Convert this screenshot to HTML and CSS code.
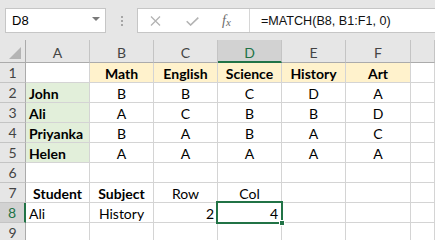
FILE: index.html
```html
<!DOCTYPE html>
<html lang="en">
<head>
    <meta charset="UTF-8">
    <meta name="viewport" content="width=device-width, initial-scale=1.0">
    <title>MATCH</title>
    <link rel="stylesheet" href="styles.css">
</head>
<body>
    <!-- name box + formula bar -->
    <div class="topbar">
        <div class="namebox">
            <span class="ref">D8</span>
            <span class="caret"></span>
        </div>
        <div class="grip"><i></i><i></i><i></i></div>
        <div class="fbar">
            <div class="fbtns">
                <svg class="ico-x" width="11" height="10" viewBox="0 0 11 10"><path d="M1 0.5 L10 9.5 M10 0.5 L1 9.5" stroke="#b3b3b3" stroke-width="1.3" fill="none"/></svg>
                <svg class="ico-ok" width="13" height="9" viewBox="0 0 13 9"><path d="M0.7 4.2 L4.6 8 L12.3 0.6" stroke="#b3b3b3" stroke-width="1.6" fill="none"/></svg>
                <span class="fx">f<i>x</i></span>
            </div>
            <div class="formula">=MATCH(B8, B1:F1, 0)</div>
        </div>
    </div>

    <!-- sheet -->
    <div class="sheet">
        <div class="corner"></div>
        <div class="ch">A</div>
        <div class="ch">B</div>
        <div class="ch">C</div>
        <div class="ch sel">D</div>
        <div class="ch">E</div>
        <div class="ch">F</div>
        <div class="ch"></div>

        <div class="rh">1</div>
        <div class="c"></div>
        <div class="c hd">Math</div>
        <div class="c hd">English</div>
        <div class="c hd">Science</div>
        <div class="c hd">History</div>
        <div class="c hd">Art</div>
        <div class="c"></div>

        <div class="rh">2</div>
        <div class="c nm">John</div>
        <div class="c mid">B</div>
        <div class="c mid">B</div>
        <div class="c mid">C</div>
        <div class="c mid">D</div>
        <div class="c mid">A</div>
        <div class="c"></div>

        <div class="rh">3</div>
        <div class="c nm">Ali</div>
        <div class="c mid">A</div>
        <div class="c mid">C</div>
        <div class="c mid">B</div>
        <div class="c mid">B</div>
        <div class="c mid">D</div>
        <div class="c"></div>

        <div class="rh">4</div>
        <div class="c nm">Priyanka</div>
        <div class="c mid">B</div>
        <div class="c mid">A</div>
        <div class="c mid">B</div>
        <div class="c mid">A</div>
        <div class="c mid">C</div>
        <div class="c"></div>

        <div class="rh">5</div>
        <div class="c nm">Helen</div>
        <div class="c mid">A</div>
        <div class="c mid">A</div>
        <div class="c mid">A</div>
        <div class="c mid">A</div>
        <div class="c mid">A</div>
        <div class="c"></div>

        <div class="rh">6</div>
        <div class="c"></div>
        <div class="c"></div>
        <div class="c"></div>
        <div class="c"></div>
        <div class="c"></div>
        <div class="c"></div>
        <div class="c"></div>

        <div class="rh">7</div>
        <div class="c mid b">Student</div>
        <div class="c mid b">Subject</div>
        <div class="c mid">Row</div>
        <div class="c mid">Col</div>
        <div class="c"></div>
        <div class="c"></div>
        <div class="c"></div>

        <div class="rh sel">8</div>
        <div class="c">Ali</div>
        <div class="c mid">History</div>
        <div class="c num">2</div>
        <div class="c num active">4<span class="handle"></span></div>
        <div class="c"></div>
        <div class="c"></div>
        <div class="c"></div>

        <div class="rh">9</div>
        <div class="c"></div>
        <div class="c"></div>
        <div class="c"></div>
        <div class="c"></div>
        <div class="c"></div>
        <div class="c"></div>
        <div class="c"></div>
    </div>
</body>
</html>
```

FILE: styles.css
```css
*{margin:0; padding:0; box-sizing:border-box;}
body {
    background:#fff;
    overflow:hidden;
    font-family:"Liberation Sans", Arial, sans-serif;
    color:#000;
}

/* 상단 이름상자 + 수식입력줄 */
.topbar {
    display:flex; align-items:flex-start;
    height:40px; padding:8px 0 0 5px;
    background:#e6e6e6;
}
.namebox {
    width:101px; height:25px;
    background:#fff; border:1px solid #c6c6c6;
    display:flex; align-items:center; justify-content:space-between;
    padding:0 5px 0 6px;
    font-size:13px;
}
.namebox .caret {
    width:0; height:0;
    border-left:4px solid transparent; border-right:4px solid transparent;
    border-top:4px solid #7a7a7a;
    margin-top:-4px;
}
.grip {
    width:31px; height:25px;
    display:flex; flex-direction:column; align-items:center; justify-content:center; gap:2px;
}
.grip i {display:block; width:2px; height:2px; background:#a6a6a6;}
.fbar {
    flex:1; height:25px; display:flex;
    background:#fff; border:1px solid #c6c6c6; border-right:none;
}
.fbtns {
    width:112px; display:flex; align-items:center;
    padding-left:12px;
    border-right:1px solid #d6d6d6;
}
.ico-ok {margin-left:25px; margin-top:2px;}
.fx {
    margin-left:23px;
    font-family:"Liberation Serif", serif; font-style:italic;
    font-size:14px; color:#6b6b6b;
}
.fx i {font-size:11px; position:relative; top:1px;}
.formula {
    padding-left:11px; display:flex; align-items:center;
    font-size:12.6px; color:#111;
}

/* 시트 - 글꼴은 Calibri 느낌으로 Lato */
.sheet {
    display:grid;
    grid-template-columns:26px 64px 64px 64px 64px 64px 65px 1fr;
    grid-template-rows:23px repeat(9, 20px);
    font-family:Lato, "Liberation Sans", sans-serif;
    font-size:14px;
}
.corner {
    background:#e6e6e6;
    border-right:1px solid #ababab; border-bottom:1px solid #ababab;
    position:relative;
}
.corner::after {
    content:''; position:absolute; right:4px; bottom:3px;
    width:0; height:0;
    border-left:12px solid transparent; border-bottom:12px solid #b4b4b4;
}
.ch {
    background:#e6e6e6; color:#444;
    border-right:1px solid #c4c4c4; border-bottom:1px solid #ababab;
    display:flex; align-items:center; justify-content:center;
    padding-top:2px;
}
.ch.sel {background:#d2d2d2; color:#217346; border-bottom:2px solid #217346; padding-top:3px;}
.rh {
    background:#e6e6e6; color:#444;
    border-right:1px solid #ababab; border-bottom:1px solid #c4c4c4;
    display:flex; align-items:center; justify-content:center;
}
.rh.sel {background:#d2d2d2; color:#217346; border-right:2px solid #217346;}

.c {
    border-right:1px solid #d4d4d4; border-bottom:1px solid #d4d4d4;
    display:flex; align-items:center;
    padding:1px 3px 0;
    white-space:nowrap;
}
.mid {justify-content:center;}
.num {justify-content:flex-end;}
.b {font-weight:bold;}
.hd {background:#fff2cc; font-weight:bold; justify-content:center;}
.nm {background:#e2efda; font-weight:bold;}

/* 선택 셀 */
.active {position:relative;}
.active::after {
    content:''; position:absolute;
    top:-2px; left:-2px; right:-2px; bottom:-2px;
    border:2px solid #217346;
}
.handle {
    position:absolute; right:-4px; bottom:-4px; z-index:2;
    width:6px; height:6px;
    background:#217346; border:1px solid #fff;
}
```
